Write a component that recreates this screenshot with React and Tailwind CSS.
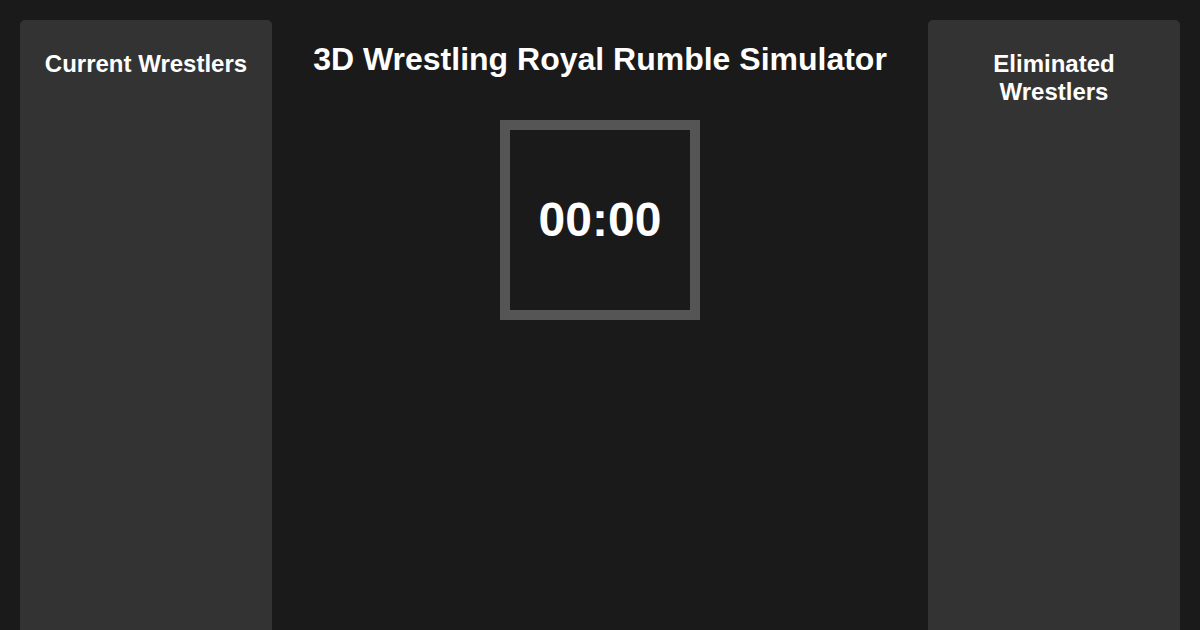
export default function App() {
    const current = [];
    const eliminated = [];

    return (
        <div className="h-screen w-full overflow-hidden bg-[#1a1a1a] text-white pt-5 px-5 flex items-start gap-5" style={{ fontFamily: '"Liberation Sans", Arial, sans-serif' }}>
            {/* Roster on the left */}
            <aside className="w-[252px] shrink-0 h-[calc(100vh-0px)] bg-[#333333] rounded-[5px] px-5 pt-[30px]">
                <h2 className="text-[24px] leading-7 font-bold text-center">Current Wrestlers</h2>
                <ul>
                    {current.map(w => <li key={w}>{w}</li>)}
                </ul>
            </aside>

            {/* Arena + clock */}
            <main className="flex-1 min-w-0 flex flex-col items-center pt-[21px]">
                <h1 className="text-[32px] leading-[37px] font-bold text-center whitespace-nowrap">3D Wrestling Royal Rumble Simulator</h1>
                <div className="mt-[42px] w-[200px] h-[200px] border-[10px] border-[#555555] bg-[#1a1a1a] flex items-center justify-center">
                    <span className="text-[48px] leading-none font-bold">00:00</span>
                </div>
            </main>

            {/* Knocked out list on the right */}
            <aside className="w-[252px] shrink-0 h-[calc(100vh-0px)] bg-[#333333] rounded-[5px] px-5 pt-[30px]">
                <h2 className="text-[24px] leading-7 font-bold text-center">Eliminated Wrestlers</h2>
                <ul>
                    {eliminated.map(w => <li key={w}>{w}</li>)}
                </ul>
            </aside>
        </div>
    );
}
